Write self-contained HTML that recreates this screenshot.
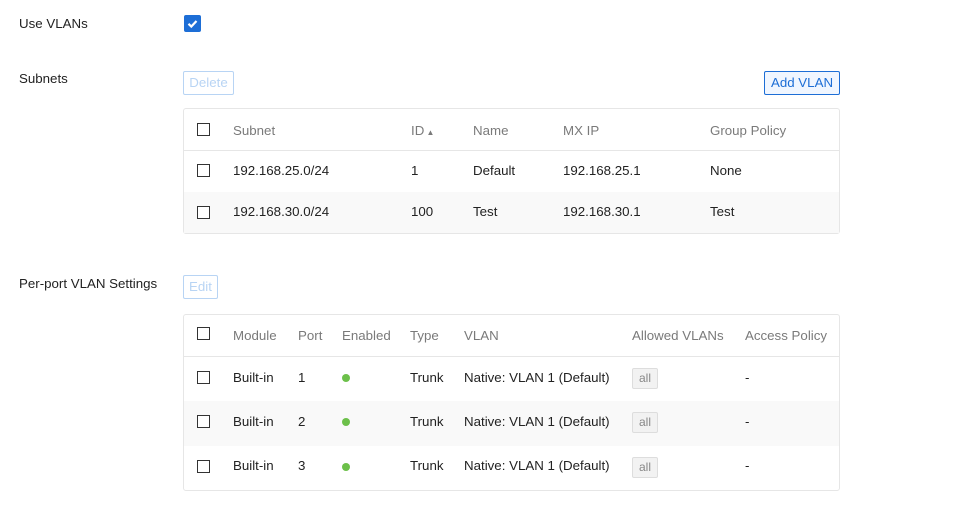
<!DOCTYPE html>
<html><head><style>
body{margin:0;width:953px;height:518px;background:#fff;font-family:"Liberation Sans",Arial,sans-serif;font-size:13.3px;color:#222;position:relative;overflow:hidden}
.a{position:absolute;white-space:nowrap;line-height:16px}
.h{color:#7a7a7a}
.box{position:absolute;border:1px solid #e6e6e6;border-radius:3px;background:#fff}
.r{position:absolute;left:0;right:0}
.cb{position:absolute;width:11px;height:11px;border:1px solid #333;background:#fff;left:13px}
.btn{position:absolute;border:1px solid;border-radius:2px;font-size:13.3px;line-height:22px;text-align:center}
.dot{position:absolute;width:8px;height:8px;border-radius:50%;background:#6cc04a}
.tag{position:absolute;width:24px;height:19px;border:1px solid #ddd;background:#f2f2f2;border-radius:2px;color:#888;font-size:12px;line-height:19px;text-align:center}
</style></head><body>
<div class="a" style="left:19px;top:16px">Use VLANs</div>
<div style="position:absolute;left:184px;top:15px;width:17px;height:17px;background:#1d6ed6;border-radius:2px"><svg width="17" height="17"><path d="M4.5 8.8l2.8 2.7 5.2-5.5" stroke="#fff" stroke-width="2.2" fill="none"/></svg></div>

<div class="a" style="left:19px;top:71px">Subnets</div>
<div class="btn" style="left:183px;top:71px;width:49px;height:22px;border-color:#b8d4f4;color:#b8d4f4">Delete</div>
<div class="btn" style="left:764px;top:71px;width:74px;height:22px;border-color:#1d6ed6;color:#1d6ed6;background:#f0f6ff">Add VLAN</div>

<div class="box" style="left:183px;top:108px;width:655px;height:124px">
 <div class="r" style="top:0;height:41px;border-bottom:1px solid #e6e6e6">
  <div class="cb" style="top:14px"></div>
  <div class="a h" style="left:49px;top:14px">Subnet</div>
  <div class="a h" style="left:227px;top:14px">ID<span style="font-size:8px"> ▲</span></div>
  <div class="a h" style="left:289px;top:14px">Name</div>
  <div class="a h" style="left:379px;top:14px">MX IP</div>
  <div class="a h" style="left:526px;top:14px">Group Policy</div>
 </div>
 <div class="r" style="top:42px;height:41px">
  <div class="cb" style="top:13px"></div>
  <div class="a" style="left:49px;top:12px">192.168.25.0/24</div>
  <div class="a" style="left:227px;top:12px">1</div>
  <div class="a" style="left:289px;top:12px">Default</div>
  <div class="a" style="left:379px;top:12px">192.168.25.1</div>
  <div class="a" style="left:526px;top:12px">None</div>
 </div>
 <div class="r" style="top:83px;height:41px;background:#f9f9f9">
  <div class="cb" style="top:14px"></div>
  <div class="a" style="left:49px;top:12px">192.168.30.0/24</div>
  <div class="a" style="left:227px;top:12px">100</div>
  <div class="a" style="left:289px;top:12px">Test</div>
  <div class="a" style="left:379px;top:12px">192.168.30.1</div>
  <div class="a" style="left:526px;top:12px">Test</div>
 </div>
</div>

<div class="a" style="left:19px;top:276px">Per-port VLAN Settings</div>
<div class="btn" style="left:183px;top:275px;width:33px;height:22px;border-color:#b8d4f4;color:#b8d4f4">Edit</div>

<div class="box" style="left:183px;top:314px;width:655px;height:175px">
 <div class="r" style="top:0;height:41px;border-bottom:1px solid #e6e6e6">
  <div class="cb" style="top:12px"></div>
  <div class="a h" style="left:49px;top:13px">Module</div>
  <div class="a h" style="left:114px;top:13px">Port</div>
  <div class="a h" style="left:158px;top:13px">Enabled</div>
  <div class="a h" style="left:226px;top:13px">Type</div>
  <div class="a h" style="left:280px;top:13px">VLAN</div>
  <div class="a h" style="left:448px;top:13px">Allowed VLANs</div>
  <div class="a h" style="left:561px;top:13px">Access Policy</div>
 </div>
 <div class="r" style="top:42px;height:44px">
  <div class="cb" style="top:14px"></div>
  <div class="a" style="left:49px;top:13px">Built-in</div>
  <div class="a" style="left:114px;top:13px">1</div>
  <div class="dot" style="left:158px;top:17px"></div>
  <div class="a" style="left:226px;top:13px">Trunk</div>
  <div class="a" style="left:280px;top:13px">Native: VLAN 1 (Default)</div>
  <div class="tag" style="left:448px;top:11px">all</div>
  <div class="a" style="left:561px;top:13px">-</div>
 </div>
 <div class="r" style="top:86px;height:45px;background:#f9f9f9">
  <div class="cb" style="top:14px"></div>
  <div class="a" style="left:49px;top:13px">Built-in</div>
  <div class="a" style="left:114px;top:13px">2</div>
  <div class="dot" style="left:158px;top:17px"></div>
  <div class="a" style="left:226px;top:13px">Trunk</div>
  <div class="a" style="left:280px;top:13px">Native: VLAN 1 (Default)</div>
  <div class="tag" style="left:448px;top:11px">all</div>
  <div class="a" style="left:561px;top:13px">-</div>
 </div>
 <div class="r" style="top:131px;height:44px">
  <div class="cb" style="top:14px"></div>
  <div class="a" style="left:49px;top:12px">Built-in</div>
  <div class="a" style="left:114px;top:12px">3</div>
  <div class="dot" style="left:158px;top:17px"></div>
  <div class="a" style="left:226px;top:12px">Trunk</div>
  <div class="a" style="left:280px;top:12px">Native: VLAN 1 (Default)</div>
  <div class="tag" style="left:448px;top:11px">all</div>
  <div class="a" style="left:561px;top:12px">-</div>
 </div>
</div>
</body></html>
